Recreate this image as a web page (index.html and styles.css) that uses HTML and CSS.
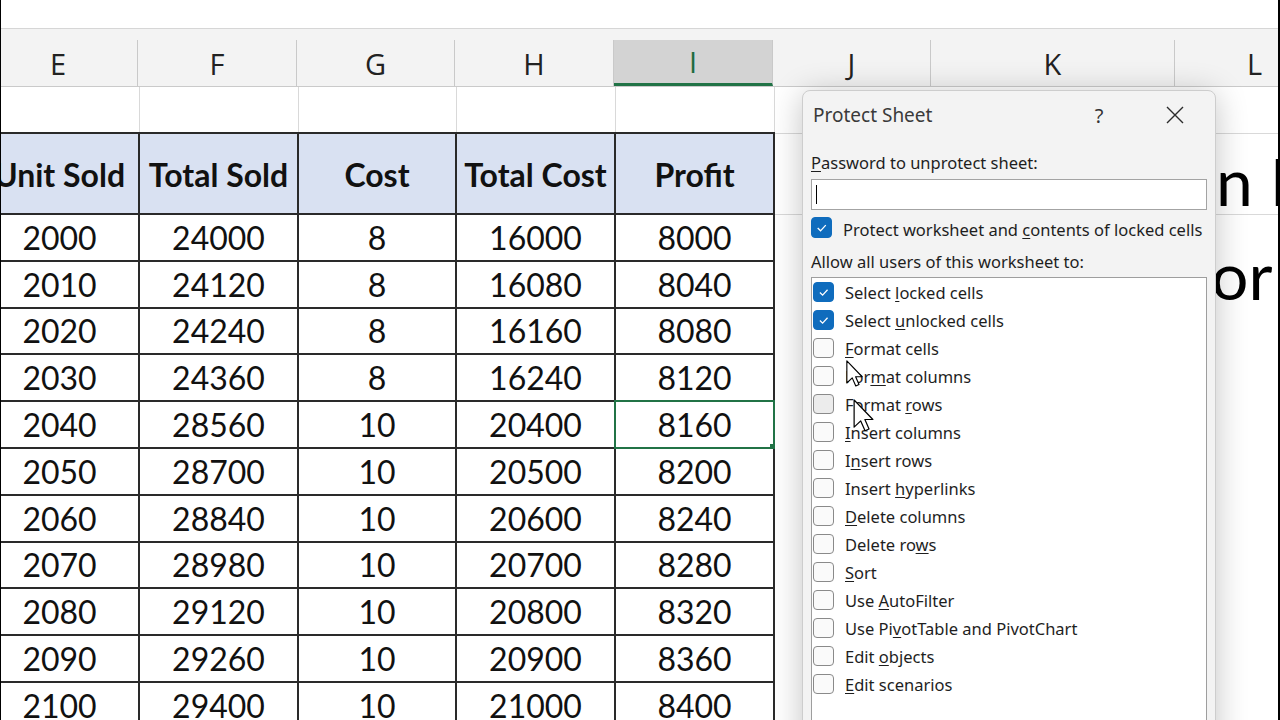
FILE: index.html
```html
<!DOCTYPE html>
<html lang="en">
<head>
  <meta charset="utf-8" />
  <title>Protect Sheet</title>
  <link rel="stylesheet" href="styles.css">
</head>
<body>
<div class="frame">
  <div class="topgap"></div>

  <div class="col-heads">
    <div class="ch w159">E</div>
    <div class="ch w159">F</div>
    <div class="ch w158">G</div>
    <div class="ch w159">H</div>
    <div class="ch w159 sel">I</div>
    <div class="ch w158">J</div>
    <div class="ch w244">K</div>
    <div class="ch w160">L</div>
  </div>

  <table class="sheet">
    <colgroup>
      <col style="width:159px"><col style="width:159px"><col style="width:158px"><col style="width:159px"><col style="width:159px"><col style="width:562px">
    </colgroup>
    <tr class="blank"><td></td><td></td><td></td><td></td><td></td><td class="side"></td></tr>
    <tr class="head">
      <th>Unit Sold</th><th>Total Sold</th><th>Cost</th><th>Total Cost</th><th>Profit</th>
      <td class="big">n I</td>
    </tr>
    <tr class="row"><td>2000</td><td>24000</td><td>8</td><td>16000</td><td>8000</td><td class="big2" rowspan="11">or</td></tr>
    <tr class="row"><td>2010</td><td>24120</td><td>8</td><td>16080</td><td>8040</td></tr>
    <tr class="row"><td>2020</td><td>24240</td><td>8</td><td>16160</td><td>8080</td></tr>
    <tr class="row"><td>2030</td><td>24360</td><td>8</td><td>16240</td><td>8120</td></tr>
    <tr class="row"><td>2040</td><td>28560</td><td>10</td><td>20400</td><td class="sel">8160</td></tr>
    <tr class="row"><td>2050</td><td>28700</td><td>10</td><td>20500</td><td>8200</td></tr>
    <tr class="row"><td>2060</td><td>28840</td><td>10</td><td>20600</td><td>8240</td></tr>
    <tr class="row"><td>2070</td><td>28980</td><td>10</td><td>20700</td><td>8280</td></tr>
    <tr class="row"><td>2080</td><td>29120</td><td>10</td><td>20800</td><td>8320</td></tr>
    <tr class="row"><td>2090</td><td>29260</td><td>10</td><td>20900</td><td>8360</td></tr>
    <tr class="row"><td>2100</td><td>29400</td><td>10</td><td>21000</td><td>8400</td></tr>
  </table>

  <div class="dialog">
    <div class="dlg-title">
      <span class="dlg-name">Protect Sheet</span>
      <span class="dlg-help">?</span>
      <span class="dlg-close">
        <svg width="18" height="18" viewBox="0 0 18 18"><path d="M1 1 L17 17 M17 1 L1 17" stroke="#2b2b2b" stroke-width="1.4" fill="none"/></svg>
      </span>
    </div>
    <div class="dlg-body">
      <div class="lbl pw-lbl"><u>P</u>assword to unprotect sheet:</div>
      <div class="pw"><span class="caret"></span></div>
      <div class="opt">
        <span class="box big-box on"><svg viewBox="0 0 20 20"><path d="M6 10.5 L9 13.5 L14.5 7.5" stroke="#fff" stroke-width="1.4" fill="none"/></svg></span>
        <span class="txt">Protect worksheet and <u>c</u>ontents of locked cells</span>
      </div>
      <div class="lbl allow">Allow all users of this worksheet to:</div>
      <ul class="perm">
        <li><span class="box on"><svg viewBox="0 0 20 20"><path d="M6 10.5 L9 13.5 L14.5 7.5" stroke="#fff" stroke-width="1.4" fill="none"/></svg></span><span class="txt">Select <u>l</u>ocked cells</span></li>
        <li><span class="box on"><svg viewBox="0 0 20 20"><path d="M6 10.5 L9 13.5 L14.5 7.5" stroke="#fff" stroke-width="1.4" fill="none"/></svg></span><span class="txt">Select <u>u</u>nlocked cells</span></li>
        <li><span class="box"></span><span class="txt"><u>F</u>ormat cells</span></li>
        <li><span class="box"></span><span class="txt">For<u>m</u>at columns</span></li>
        <li><span class="box hover"></span><span class="txt">Format <u>r</u>ows</span></li>
        <li><span class="box"></span><span class="txt"><u>I</u>nsert columns</span></li>
        <li><span class="box"></span><span class="txt">I<u>n</u>sert rows</span></li>
        <li><span class="box"></span><span class="txt">Insert <u>h</u>yperlinks</span></li>
        <li><span class="box"></span><span class="txt"><u>D</u>elete columns</span></li>
        <li><span class="box"></span><span class="txt">Delete ro<u>w</u>s</span></li>
        <li><span class="box"></span><span class="txt"><u>S</u>ort</span></li>
        <li><span class="box"></span><span class="txt">Use <u>A</u>utoFilter</span></li>
        <li><span class="box"></span><span class="txt">Use Pi<u>v</u>otTable and PivotChart</span></li>
        <li><span class="box"></span><span class="txt">Edit <u>o</u>bjects</span></li>
        <li><span class="box"></span><span class="txt"><u>E</u>dit scenarios</span></li>
      </ul>
    </div>
  </div>

  <svg class="cursor c1" width="17" height="27" viewBox="0 0 12 19"><path d="M0.6 0.6 L0.6 16.2 L4.4 12.6 L6.9 18.3 L9.2 17.3 L6.8 11.8 L11.4 11.8 Z" fill="#fff" stroke="#000" stroke-width="0.8" stroke-linejoin="round"/></svg>
  <svg class="cursor c2" width="21" height="33" viewBox="0 0 12 19"><path d="M0.6 0.6 L0.6 16.2 L4.4 12.6 L6.9 18.3 L9.2 17.3 L6.8 11.8 L11.4 11.8 Z" fill="#fff" stroke="#000" stroke-width="0.7" stroke-linejoin="round"/></svg>
</div>
</body>
</html>
```

FILE: styles.css
```css
html, body { margin: 0; padding: 0; }
body { width: 1280px; height: 720px; overflow: hidden; background: #fff; font-family: "Noto Sans", "DejaVu Sans", sans-serif; color: #1b1b1b; }
.frame { position: relative; width: 1280px; height: 720px; overflow: hidden; background: #fff; }
.frame::after { content: ""; position: absolute; top: 0; bottom: 0; left: 0; right: 0; border-left: 1px solid #000; border-right: 2px solid #000; pointer-events: none; z-index: 9; }

/* column letters */
.topgap { height: 28px; border-bottom: 1px solid #d6d6d6; }
.col-heads { display: flex; margin-left: -21px; height: 58px; box-sizing: border-box; background: #f3f3f3; border-bottom: 1px solid #cacaca; }
.ch { flex: none; box-sizing: border-box; margin-top: 11px; height: 46px; border-right: 1px solid #c9c9c9; display: flex; align-items: center; justify-content: center; font-family: "Open Sans", "Noto Sans", sans-serif; font-size: 29px; color: #222; }
.ch.sel { background: #d3d3d3; color: #1d6b40; border-bottom: 3px solid #217346; }
.w158 { width: 158px; }
.w159 { width: 159px; }
.w160 { width: 160px; }
.w244 { width: 244px; }

/* grid */
.sheet { border-collapse: collapse; table-layout: fixed; width: 1356px; margin-left: -21px; font-family: Lato, "Liberation Sans", sans-serif; font-size: 32px; color: #111; }
.sheet td, .sheet th { padding: 0; text-align: center; white-space: nowrap; overflow: hidden; }
.blank td { height: 45px; border-right: 1px solid #d9d9d9; }
.blank td.side { border-right: none; }
.head th { height: 77px; background: #d9e1f2; border: 2px solid #2a2a2a; font-weight: 700; padding-top: 2px; }
.row td { height: 44.8px; border: 2px solid #2a2a2a; }
.sheet .big { text-align: left; vertical-align: bottom; padding-left: 441px; font-size: 66px; line-height: 66px; border-top: 1px solid #d9d9d9; border-bottom: 1px solid #d9d9d9; color: #000; }
.sheet .big2 { border: none; text-align: left; vertical-align: top; padding-top: 27px; padding-left: 436px; font-size: 66px; line-height: 66px; color: #000; }
.row td.sel { position: relative; outline: 2px solid #217346; outline-offset: -1px; }
.row td.sel::after { content: ""; position: absolute; right: -4px; bottom: -4px; width: 6px; height: 6px; background: #217346; border: 1px solid #fff; }

/* dialog */
.dialog { position: absolute; left: 802px; top: 90px; width: 414px; height: 700px; box-sizing: border-box; background: #f3f3f3; border: 1px solid #cdcdcd; border-radius: 8px; box-shadow: 0 4px 32px rgba(0,0,0,0.24); z-index: 3; }
.dlg-title { display: flex; align-items: center; height: 48px; padding-left: 10px; padding-right: 16px; }
.dlg-name { font-size: 19px; color: #3a3a3a; }
.dlg-help { margin-left: auto; width: 48px; text-align: center; font-size: 20px; color: #333; }
.dlg-close { width: 48px; margin-left: 28px; display: flex; justify-content: center; }
.dlg-body { padding: 0 8px; font-size: 16.5px; }
.lbl { line-height: 22px; color: #1e1e1e; }
.txt { white-space: nowrap; }
u { text-decoration-thickness: 1px; text-underline-offset: 2px; }
.pw-lbl { margin-top: 13px; }
.pw { margin-top: 5px; height: 31px; box-sizing: border-box; background: #fff; border: 1px solid #a3a3a3; padding: 5px 0 0 4px; }
.caret { display: block; width: 1px; height: 19px; background: #000; }
.opt { display: flex; align-items: center; gap: 11px; margin-top: 7px; height: 21px; color: #1e1e1e; }
.opt .txt { padding-top: 3px; }
.allow { margin-top: 13px; }
.perm { list-style: none; margin: 4px 0 0; padding: 0; height: 520px; background: #fff; border: 1px solid #9e9e9e; }
.perm li { display: flex; align-items: center; gap: 11px; height: 28px; padding-left: 1px; color: #1e1e1e; }
.box { flex: none; box-sizing: border-box; width: 21px; height: 20px; border: 1px solid #8a8a8a; border-radius: 4px; background: #fafafa; }
.box svg { display: block; width: 100%; height: 100%; }
.box.on { background: #0f6cbd; border-color: #0f6cbd; }
.box.hover { background: #ececec; }
.big-box { height: 21px; }

.cursor { position: absolute; z-index: 5; }
.c1 { left: 846px; top: 360px; }
.c2 { left: 853px; top: 399px; }
```
